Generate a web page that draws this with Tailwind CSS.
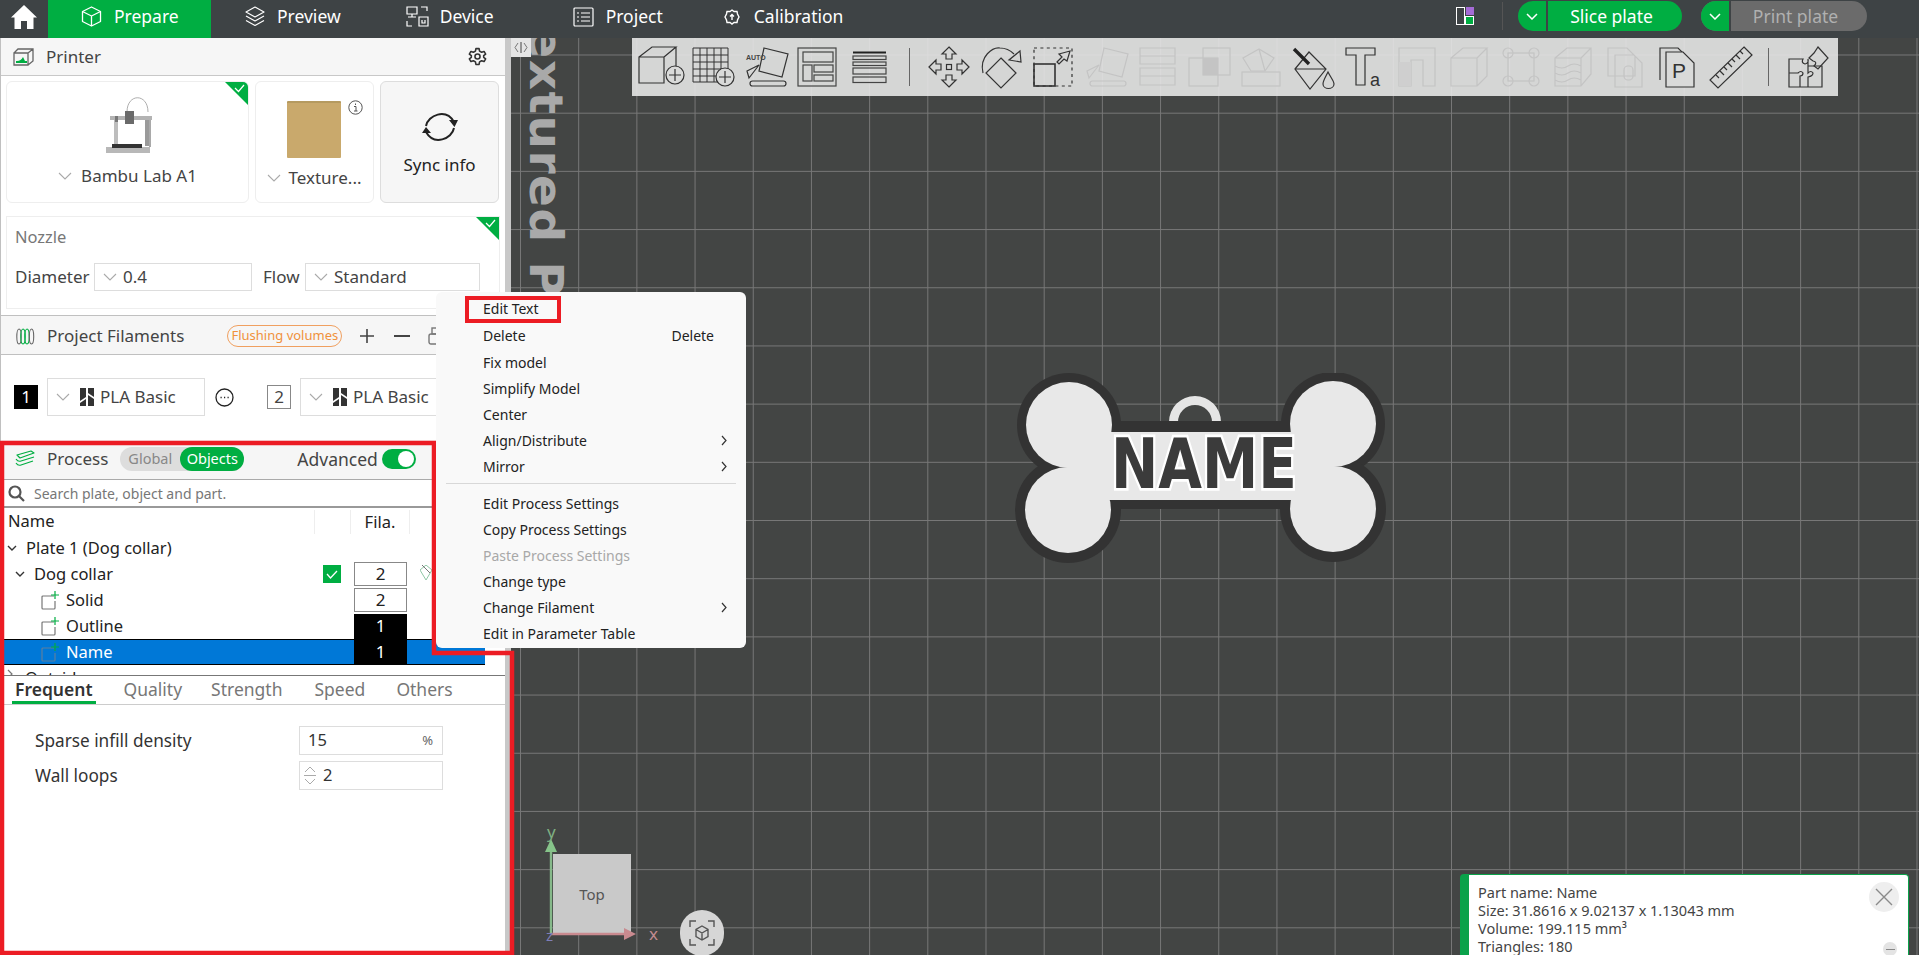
<!DOCTYPE html>
<html lang="en">
<head>
    <meta charset="UTF-8">
    <meta name="viewport" content="width=device-width, initial-scale=1.0">
    <title>Bambu Studio</title>
    <script src="https://cdn.jsdelivr.net/npm/@tailwindcss/browser@4"></script>
</head>
<body class="relative w-[1919px] h-[955px] overflow-hidden bg-[#434544] font-['Noto_Sans',sans-serif] text-[#333]">

    <!-- Top bar -->
    <header class="h-[38px] bg-[#3e4345] flex items-start text-white text-[17.5px]">
        <div class="w-[48px] h-[33px] flex items-center justify-center">
            <svg class="w-[26px] h-[26px]" viewBox="0 0 26 26" fill="#fff"><path d="M13 1 L26 13.5 L22.5 13.5 L22.5 25 L16 25 L16 17 L10 17 L10 25 L3.5 25 L3.5 13.5 L0 13.5 Z"/></svg>
        </div>
        <div class="w-[163px] h-[38px] pb-[5px] bg-[#00ae42] flex items-center pl-[33px] gap-[12px]">
            <svg class="w-[21px] h-[21px]" viewBox="0 0 21 21" fill="none" stroke="#fff" stroke-width="1.3"><path d="M10.5 1 L19.5 5.5 V15.5 L10.5 20 L1.5 15.5 V5.5 Z M1.5 5.5 L10.5 10 L19.5 5.5 M10.5 10 V20" stroke-linejoin="round"/></svg>
            <span>Prepare</span>
        </div>
        <div class="ml-[34px] h-[33px] flex items-center gap-[12px]">
            <svg class="w-[20px] h-[21px]" viewBox="0 0 20 21" fill="none" stroke="#fff" stroke-width="1.2"><path d="M10 1 L19 6 L10 11 L1 6 Z M1 10 L10 15 L19 10 M1 14.5 L10 19.5 L19 14.5" stroke-linejoin="round"/></svg>
            <span>Preview</span>
        </div>
        <div class="ml-[65px] h-[33px] flex items-center gap-[11px]">
            <svg class="w-[23px] h-[21px]" viewBox="0 0 23 21" fill="none" stroke="#fff" stroke-width="1.2"><path d="M1 1 H11 V8 H1 Z M6 8 V11 M2 11 H10 M15 1 H21 V5 M1 15 V20 H6 M13 11 H22 V20 H13 Z M16 14 V17 H19 V14"/></svg>
            <span>Device</span>
        </div>
        <div class="ml-[79px] h-[33px] flex items-center gap-[12px]">
            <svg class="w-[21px] h-[20px]" viewBox="0 0 21 20" fill="none" stroke="#fff" stroke-width="1.2"><rect x="1" y="1" width="19" height="18" rx="1"/><path d="M4 6 H6 M8 6 H17 M4 10 H6 M8 10 H17 M4 14 H6 M8 14 H17"/></svg>
            <span>Project</span>
        </div>
        <div class="ml-[61px] h-[33px] flex items-center gap-[14px]">
            <svg class="w-[16px] h-[16px]" viewBox="0 0 16 16" fill="none" stroke="#fff" stroke-width="1.4"><path d="M8 1 L10 2.5 L13 2.5 L13.5 5 L15 8 L13.5 11 L13 13.5 L10 13.5 L8 15 L6 13.5 L3 13.5 L2.5 11 L1 8 L2.5 5 L3 2.5 L6 2.5 Z"/><path d="M8 11 V6 M6 7.5 L8 5.5 L10 7.5"/></svg>
            <span>Calibration</span>
        </div>
        <div class="ml-auto h-[32px] flex items-center">
            <svg class="w-[18px] h-[18px]" viewBox="0 0 18 18"><rect x="0.5" y="0.5" width="8" height="17" fill="#3e4345" stroke="#fff"/><rect x="10" y="0" width="8" height="8" fill="#a56bd6"/><rect x="9.5" y="9.5" width="8" height="8" fill="#00ae42" stroke="#fff"/></svg>
            <div class="ml-[28px] mr-[15px] w-px h-[28px] bg-[#555]"></div>
            <div class="w-[164px] h-[30px] rounded-full overflow-hidden bg-[#00ae42] flex items-center">
                <div class="w-[30px] h-full flex items-center justify-center border-r-2 border-[#3e4345]">
                    <svg class="w-[12px] h-[7px]" viewBox="0 0 12 7" fill="none" stroke="#fff" stroke-width="1.5"><path d="M1 1 L6 6 L11 1"/></svg>
                </div>
                <span class="flex-1 text-center pr-[7px]">Slice plate</span>
            </div>
            <div class="ml-[19px] mr-[52px] w-[166px] h-[30px] rounded-full overflow-hidden bg-[#6b6b6b] flex items-center">
                <div class="w-[30px] h-full bg-[#00ae42] flex items-center justify-center border-r-2 border-[#3e4345]">
                    <svg class="w-[12px] h-[7px]" viewBox="0 0 12 7" fill="none" stroke="#fff" stroke-width="1.5"><path d="M1 1 L6 6 L11 1"/></svg>
                </div>
                <span class="flex-1 text-center pr-[7px] text-[#b0b0b0]">Print plate</span>
            </div>
        </div>
    </header>

    <main class="flex h-[917px]">
        <!-- Left sidebar -->
        <aside class="w-[505px] shrink-0 bg-white border-l border-[#c0c0c0] flex flex-col overflow-hidden">
            <!-- Printer -->
            <div class="h-[38px] shrink-0 bg-[#f6f6f6] border-b border-[#c8c8c8] flex items-center pl-[12px] pr-[18px] text-[17px] text-[#444]">
                <svg class="w-[21px] h-[18px]" viewBox="0 0 21 18" fill="none" stroke="#666" stroke-width="1.3"><path d="M1 5 H15 V17 H1 Z M1 5 L5 1 H20 V13 L15 17 M15 5 L20 1"/><path d="M4 13 Q8 13 10 9 L12 13 H14 V15 H3 V13 Z" fill="#00ae42" stroke="none"/></svg>
                <span class="ml-[12px]">Printer</span>
                <svg class="w-[19px] h-[19px] ml-auto" viewBox="0 0 24 24" fill="none" stroke="#333" stroke-width="2"><circle cx="12" cy="12" r="3.2"/><path d="M10 2 H14 L14.6 5.2 L17.2 6.7 L20.3 5.6 L22.3 9 L19.8 11 V13 L22.3 15 L20.3 18.4 L17.2 17.3 L14.6 18.8 L14 22 H10 L9.4 18.8 L6.8 17.3 L3.7 18.4 L1.7 15 L4.2 13 V11 L1.7 9 L3.7 5.6 L6.8 6.7 L9.4 5.2 Z" stroke-linejoin="round"/></svg>
            </div>
            <div class="mt-[5px] ml-[5px] flex gap-[6px] h-[122px] shrink-0">
                <div class="relative w-[243px] border border-[#eee] rounded-[6px] flex flex-col items-center pt-[15px] overflow-hidden">
                    <svg class="absolute right-0 top-0 w-[23px] h-[23px]" viewBox="0 0 23 23"><path d="M0 0 H23 V23 Z" fill="#00ae42"/><path d="M10 6 L13.5 9.5 L19 3" fill="none" stroke="#fff" stroke-width="1.2"/></svg>
                    <svg class="w-[50px] h-[58px] ml-[2px]" viewBox="0 0 50 58" fill="none"><path d="M23 15 C23 -4 44 -4 44 15" stroke="#999" stroke-width="0.8"/><rect x="6" y="19" width="42" height="4" fill="#b3b3b3"/><rect x="10" y="23" width="4" height="26" fill="#bdbdbd"/><rect x="11" y="19" width="3" height="6" fill="#777"/><rect x="41" y="23" width="4" height="26" fill="#9a9a9a"/><rect x="21" y="14" width="9" height="13" fill="#6a6a6a"/><rect x="2" y="50" width="44" height="6" fill="#b8b8b8"/><rect x="8" y="47" width="30" height="4" fill="#333"/><path d="M46 23 V50" stroke="#555" stroke-width="1"/></svg>
                    <div class="flex items-center mt-[8px] text-[17px] text-[#444]">
                        <svg class="w-[14px] h-[8px] mr-[9px]" viewBox="0 0 14 8" fill="none" stroke="#aaa" stroke-width="1.1"><path d="M1 1 L7 7 L13 1"/></svg>
                        <span>Bambu Lab A1</span>
                    </div>
                </div>
                <div class="relative w-[119px] border border-[#eee] rounded-[6px] flex flex-col items-center pt-[19px]">
                    <svg class="absolute left-[92px] top-[18px] w-[15px] h-[15px]" viewBox="0 0 15 15" fill="none" stroke="#555"><circle cx="7.5" cy="7.5" r="6.7"/><path d="M6 6.5 H8 V11 M6 11 H9.5 M7.5 3.5 V5"/></svg>
                    <div class="w-[54px] h-[57px] rounded-[1px] bg-[#c9a96c] border-t-2 border-[#b59a60] -ml-[2px]"></div>
                    <div class="flex items-center mt-[7px] text-[17px] text-[#444]">
                        <svg class="w-[14px] h-[8px] mr-[7px]" viewBox="0 0 14 8" fill="none" stroke="#aaa" stroke-width="1.1"><path d="M1 1 L7 7 L13 1"/></svg>
                        <span>Texture...</span>
                    </div>
                </div>
                <div class="w-[119px] bg-[#f6f6f6] border border-[#ddd] rounded-[6px] flex flex-col items-center pt-[29px] text-[17px] text-[#222]">
                    <svg class="w-[38px] h-[32px]" viewBox="0 0 38 32" fill="none" stroke="#222" stroke-width="2"><path d="M5 15 C7 4 25 -3 33 11 M33 17 C31 28 13 35 5 21"/><path d="M28 9 H37 L33.5 16 Z M1 22 H10 L5 16 Z" fill="#222" stroke="none"/></svg>
                    <span class="mt-[9px]">Sync info</span>
                </div>
            </div>
            <!-- Nozzle -->
            <div class="relative mt-[13px] ml-[5px] w-[494px] h-[93px] shrink-0 border border-[#eee] text-[17px] text-[#444]">
                <svg class="absolute right-0 top-0 w-[23px] h-[23px]" viewBox="0 0 23 23"><path d="M0 0 H23 V23 Z" fill="#00ae42"/><path d="M10 6 L13.5 9.5 L19 3" fill="none" stroke="#fff" stroke-width="1.2"/></svg>
                <div class="pl-[8px] pt-[8px] text-[#777] text-[16.5px]">Nozzle</div>
                <div class="flex items-center mt-[13px] pl-[8px]">
                    <span class="w-[79px]">Diameter</span>
                    <div class="w-[158px] h-[28px] border border-[#ddd] flex items-center pl-[8px]">
                        <svg class="w-[14px] h-[8px] mr-[6px]" viewBox="0 0 14 8" fill="none" stroke="#aaa" stroke-width="1.1"><path d="M1 1 L7 7 L13 1"/></svg>
                        <span>0.4</span>
                    </div>
                    <span class="ml-[11px] w-[42px]">Flow</span>
                    <div class="w-[175px] h-[28px] border border-[#ddd] flex items-center pl-[8px]">
                        <svg class="w-[14px] h-[8px] mr-[6px]" viewBox="0 0 14 8" fill="none" stroke="#aaa" stroke-width="1.1"><path d="M1 1 L7 7 L13 1"/></svg>
                        <span>Standard</span>
                    </div>
                </div>
            </div>
            <!-- Project filaments -->
            <div class="mt-[6px] h-[40px] shrink-0 bg-[#f6f6f6] border-y border-[#c0c0c0] flex items-center pt-[2px] pl-[15px] text-[17px] text-[#444]">
                <svg class="w-[19px] h-[17px]" viewBox="0 0 19 17" fill="none" stroke="#666" stroke-width="1.1"><ellipse cx="3" cy="8.5" rx="2.2" ry="7.5"/><ellipse cx="7" cy="8.5" rx="2.2" ry="7.5" stroke="#00ae42"/><ellipse cx="11" cy="8.5" rx="2.2" ry="7.5" stroke="#00ae42"/><ellipse cx="15.5" cy="8.5" rx="2.2" ry="7.5"/></svg>
                <span class="ml-[12px]">Project Filaments</span>
                <span class="ml-[43px] w-[115px] h-[22px] rounded-full border border-[#f0a060] flex items-center justify-center text-[13px] text-[#f0913c] whitespace-nowrap">Flushing volumes</span>
                <svg class="ml-[18px] w-[14px] h-[14px]" viewBox="0 0 14 14" stroke="#444" stroke-width="1.6"><path d="M7 0 V14 M0 7 H14"/></svg>
                <svg class="ml-[20px] w-[16px] h-[2px]" viewBox="0 0 16 2" stroke="#444" stroke-width="2"><path d="M0 1 H16"/></svg>
                <svg class="ml-[18px] w-[10px] h-[18px]" viewBox="0 0 10 18" fill="none" stroke="#777" stroke-width="1.4"><rect x="1" y="7" width="12" height="10" rx="2"/><rect x="4" y="1" width="8" height="6"/></svg>
            </div>
            <div class="h-[85px] shrink-0 flex items-center pb-[1px] pl-[13px] text-[17px] text-[#444]">
                <span class="w-[24px] h-[24px] bg-black text-white flex items-center justify-center">1</span>
                <div class="ml-[9px] w-[158px] h-[38px] border border-[#ddd] flex items-center pl-[8px]">
                    <svg class="w-[14px] h-[8px] mr-[10px]" viewBox="0 0 14 8" fill="none" stroke="#aaa" stroke-width="1.1"><path d="M1 1 L7 7 L13 1"/></svg>
                    <svg class="w-[14px] h-[18px] mr-[6px]" viewBox="0 0 14 18" fill="#333"><path d="M0 0 H6 V9 L0 13 Z M8 0 H14 V9 L8 5 Z M0 15 L6 11 V18 H0 Z M8 7 L14 11 V18 H8 Z"/></svg>
                    <span>PLA Basic</span>
                </div>
                <svg class="ml-[10px] w-[19px] h-[19px]" viewBox="0 0 19 19" fill="none" stroke="#222" stroke-width="1.3"><circle cx="9.5" cy="9.5" r="8.5"/><path d="M5.5 9.5 H6.7 M9 9.5 H10.2 M12.5 9.5 H13.7" stroke-width="1.6"/></svg>
                <span class="ml-[33px] w-[24px] h-[24px] border border-[#888] flex items-center justify-center">2</span>
                <div class="ml-[9px] w-[158px] h-[38px] border border-[#ddd] flex items-center pl-[8px]">
                    <svg class="w-[14px] h-[8px] mr-[10px]" viewBox="0 0 14 8" fill="none" stroke="#aaa" stroke-width="1.1"><path d="M1 1 L7 7 L13 1"/></svg>
                    <svg class="w-[14px] h-[18px] mr-[6px]" viewBox="0 0 14 18" fill="#333"><path d="M0 0 H6 V9 L0 13 Z M8 0 H14 V9 L8 5 Z M0 15 L6 11 V18 H0 Z M8 7 L14 11 V18 H8 Z"/></svg>
                    <span>PLA Basic</span>
                </div>
            </div>
            <!-- Process -->
            <div class="h-[40px] shrink-0 bg-[#f6f6f6] border-b border-[#aaa] flex items-center pb-[1px] pl-[14px] text-[17px] text-[#444]">
                <svg class="w-[20px] h-[18px]" viewBox="0 0 20 18" fill="none" stroke="#00ae42" stroke-width="1.2"><path d="M2 5 L16 1 L19 3 L5 8 Z M1 9 Q3 12 6 11 L19 7 M1 13 Q3 16 6 15 L18 11" stroke-linejoin="round"/></svg>
                <span class="ml-[12px]">Process</span>
                <div class="ml-[12px] w-[124px] h-[24px] rounded-full bg-[#ddd] flex items-center text-[14.5px]">
                    <span class="w-[60px] text-center text-[#888]">Global</span>
                    <span class="w-[64px] h-full rounded-full bg-[#00ae42] text-white flex items-center justify-center">Objects</span>
                </div>
                <span class="ml-[53px] text-[17.5px]">Advanced</span>
                <div class="ml-[4px] w-[34px] h-[20px] rounded-full bg-[#00ae42] flex items-center justify-end pr-[2px]">
                    <span class="w-[16px] h-[16px] rounded-full bg-white"></span>
                </div>
            </div>
            <div class="h-[28px] shrink-0 border-b-2 border-[#999] flex items-center pl-[7px] text-[14px] text-[#777]">
                <svg class="w-[17px] h-[17px]" viewBox="0 0 17 17" fill="none" stroke="#555" stroke-width="2.2"><circle cx="7" cy="7" r="5.5"/><path d="M11 11 L16 16"/></svg>
                <span class="ml-[9px]">Search plate, object and part.</span>
            </div>
            <!-- Object tree -->
            <div class="h-[168px] shrink-0 overflow-hidden border-b border-[#777] text-[16.5px] text-[#222]">
                <div class="h-[27px] w-[410px] flex items-center pl-[7px]">
                    <span class="w-[306px]">Name</span>
                    <span class="w-[36px] h-[24px] border-l border-[#eee]"></span>
                    <span class="w-[60px] h-[24px] border-x border-[#eee] text-center">Fila.</span>
                </div>
                <div class="h-[26px] flex items-center pl-[6px]">
                    <svg class="w-[10px] h-[6px] mr-[9px]" viewBox="0 0 10 6" fill="none" stroke="#333" stroke-width="1.4"><path d="M1 1 L5 5 L9 1"/></svg>
                    <span>Plate 1 (Dog collar)</span>
                </div>
                <div class="h-[26px] flex items-center pl-[14px]">
                    <svg class="w-[10px] h-[6px] mr-[9px]" viewBox="0 0 10 6" fill="none" stroke="#333" stroke-width="1.4"><path d="M1 1 L5 5 L9 1"/></svg>
                    <span class="w-[289px]">Dog collar</span>
                    <span class="w-[18px] h-[18px] bg-[#00ae42] flex items-center justify-center">
                        <svg class="w-[12px] h-[9px]" viewBox="0 0 12 9" fill="none" stroke="#fff" stroke-width="1.3"><path d="M1 4 L4.5 8 L11 1"/></svg>
                    </span>
                    <span class="ml-[13px] w-[53px] h-[24px] border border-[#888] flex items-center justify-center text-[17px]">2</span>
                    <svg class="ml-[13px] w-[12px] h-[18px]" viewBox="0 0 12 18" fill="none" stroke="#8fc7a5"><path d="M0 5 L6 0 L12 5 L6 15 Z"/><path d="M2 0 L10 8" stroke="#777"/></svg>
                </div>
                <div class="h-[26px] flex items-center pl-[40px]">
                    <svg class="w-[21px] h-[19px]" viewBox="0 0 21 19" fill="none" stroke="#777" stroke-width="1.2"><path d="M13 5 H2 Q1 5 1 6 V17 Q1 18 2 18 H13 Q14 18 14 17 V10"/><path d="M14 0 V8 M10 4 H18" stroke="#00ae42"/></svg>
                    <span class="ml-[4px] w-[288px]">Solid</span>
                    <span class="w-[53px] h-[24px] border border-[#888] flex items-center justify-center text-[17px]">2</span>
                </div>
                <div class="h-[26px] flex items-center pl-[40px]">
                    <svg class="w-[21px] h-[19px]" viewBox="0 0 21 19" fill="none" stroke="#777" stroke-width="1.2"><path d="M13 5 H2 Q1 5 1 6 V17 Q1 18 2 18 H13 Q14 18 14 17 V10"/><path d="M14 0 V8 M10 4 H18" stroke="#00ae42"/></svg>
                    <span class="ml-[4px] w-[288px]">Outline</span>
                    <span class="w-[53px] h-[25px] bg-black text-white flex items-center justify-center text-[17px]">1</span>
                </div>
                <div class="h-[26px] w-[482px] ml-[2px] bg-[#0078d7] border-y border-black flex items-center pl-[38px] text-white">
                    <svg class="w-[21px] h-[19px]" viewBox="0 0 21 19" fill="none" stroke="#5b7f9f" stroke-width="1.2"><path d="M13 5 H2 Q1 5 1 6 V17 Q1 18 2 18 H13 Q14 18 14 17 V10"/><path d="M14 0 V8 M10 4 H18" stroke="#00ae42"/></svg>
                    <span class="ml-[4px] w-[288px]">Name</span>
                    <span class="w-[53px] h-[24px] bg-black text-white flex items-center justify-center text-[17px]">1</span>
                </div>
                <div class="h-[11px] overflow-hidden flex items-start pl-[6px]">
                    <svg class="w-[6px] h-[10px] mr-[12px] mt-[4px]" viewBox="0 0 6 10" fill="none" stroke="#777" stroke-width="1.2"><path d="M1 1 L5 5 L1 9"/></svg>
                    <span class="leading-[26px]">Outside</span>
                </div>
            </div>
            <!-- Settings tabs -->
            <div class="h-[29px] shrink-0 border-b border-[#ccc] flex pl-[11px] text-[17.5px] leading-[27px] text-[#777]">
                <span class="h-[28px] px-[3px] border-b-[3px] border-[#00ae42] font-semibold text-[#333]">Frequent</span>
                <span class="ml-[28px]">Quality</span>
                <span class="ml-[29px]">Strength</span>
                <span class="ml-[32px]">Speed</span>
                <span class="ml-[31px]">Others</span>
            </div>
            <div class="pt-[21px] pl-[34px] text-[17.2px] text-[#333]">
                <div class="h-[29px] flex items-center">
                    <span class="w-[264px]">Sparse infill density</span>
                    <div class="w-[144px] h-[29px] border border-[#ddd] flex items-center justify-between pl-[8px] pr-[9px] text-[16.5px]">
                        <span>15</span><span class="text-[13px] text-[#666]">%</span>
                    </div>
                </div>
                <div class="h-[29px] mt-[6px] flex items-center">
                    <span class="w-[264px]">Wall loops</span>
                    <div class="w-[144px] h-[29px] border border-[#ddd] flex items-center pl-[3px] text-[16.5px]">
                        <svg class="w-[14px] h-[21px]" viewBox="0 0 14 21" fill="none" stroke="#aaa"><path d="M2 7 L7 2 L12 7 M1 10.5 H13 M2 14 L7 19 L12 14"/></svg>
                        <span class="ml-[6px]">2</span>
                    </div>
                </div>
            </div>
        </aside>

        <!-- 3D canvas -->
        <section class="relative flex-1 overflow-hidden border-l-[6px] border-[#c8c8c8] bg-[#434544] bg-[linear-gradient(#777_1.3px,transparent_1.3px),linear-gradient(90deg,#777_1.3px,transparent_1.3px)] bg-[size:58.2px_58.2px] bg-[position:9px_16.5px]">
            <!-- plate label printed on the bed -->
            <div class="absolute left-[11px] top-0 w-[52px] h-[254px] overflow-hidden">
                <div class="absolute left-0 top-[-39px] [writing-mode:vertical-rl] font-['DejaVu_Sans',sans-serif] text-[47px] tracking-[1.5px] font-bold leading-[48px] whitespace-nowrap text-[#a9a9a9]">Textured PEI</div>
            </div>
            <div class="absolute left-0 top-0 w-[20px] h-[19px] bg-[#e5e5e5] flex items-center justify-center">
                <svg class="w-[14px] h-[11px]" viewBox="0 0 14 11" fill="none" stroke="#777"><path d="M4 1 L1 5.5 L4 10 M10 1 L13 5.5 L10 10"/><path d="M7 0 V11" stroke="#444"/></svg>
            </div>

            <!-- Toolbar -->
            <div class="absolute left-[121px] top-0 w-[1206px] h-[58px] bg-[#e6e6e6]/90 flex items-center pl-[3px]">
                <div class="flex [&>svg]:mx-[2px] [&>svg]:w-[48px] [&>svg]:h-[46px]">
                    <svg viewBox="0 0 48 46" fill="none" stroke="#333" stroke-width="1.2"><path d="M2 13 H27 V39 H2 Z M2 13 L15 3 H39 L27 13 M39 3 V30"/><circle cx="38" cy="31" r="9" fill="#d9dad9"/><path d="M38 25 V37 M32 31 H44"/></svg>
                    <svg viewBox="0 0 48 46" fill="none" stroke="#333" stroke-width="1"><path d="M4 4 H39 V38 H4 Z M11 4 V38 M18 4 V38 M25 4 V38 M32 4 V38 M4 11 H39 M4 18 H39 M4 25 H39 M4 32 H39"/><circle cx="36" cy="33" r="9" fill="#d9dad9" stroke-width="1.2"/><path d="M36 27 V39 M30 33 H42" stroke-width="1.2"/></svg>
                    <svg viewBox="0 0 48 46" fill="none" stroke="#333" stroke-width="1.2"><path d="M23 4 L47 10 L41 33 L18 27 Z M6 27 L18 21 L8 34 Z"/><rect x="9" y="37" width="36" height="5" rx="2.5"/><text x="5" y="16" font-size="7" font-weight="700" fill="#444" stroke="none" font-family="Liberation Sans">AUTO</text></svg>
                    <svg viewBox="0 0 48 46" fill="none" stroke="#444" stroke-width="1.2"><rect x="5" y="4" width="38" height="38"/><rect x="10" y="8" width="30" height="10"/><rect x="10" y="21" width="9" height="16"/><rect x="21" y="21" width="19" height="7"/><rect x="21" y="31" width="19" height="6"/></svg>
                    <svg viewBox="0 0 48 46" fill="none" stroke="#444" stroke-width="1.2"><path d="M8 8.5 H41" stroke-width="2" stroke="#222"/><rect x="8" y="12" width="33" height="3.5"/><rect x="8" y="18" width="33" height="3.5"/><rect x="8" y="24" width="33" height="6"/><rect x="8" y="33" width="33" height="5.5"/></svg>
                </div>
                <div class="w-[28px] flex justify-center"><span class="block w-px h-[38px] bg-[#666]"></span></div>
                <div class="flex [&>svg]:mx-[2px] [&>svg]:w-[48px] [&>svg]:h-[46px]">
                    <svg viewBox="0 0 48 46" fill="none" stroke="#333" stroke-width="1.2"><path d="M24 3 L31 10 H27 V15 H21 V10 H17 Z M24 43 L31 36 H27 V31 H21 V36 H17 Z M4 23 L11 16 V20 H16 V26 H11 V30 Z M44 23 L37 16 V20 H32 V26 H37 V30 Z"/><rect x="21.5" y="20.5" width="5" height="5"/></svg>
                    <svg viewBox="0 0 48 46" fill="none" stroke="#333" stroke-width="1.2"><path d="M24 14 L39 29 L24 44 L9 29 Z"/><path d="M6 29 C2 12 16 3 23 4 C29 4 34 7 37 10"/><path d="M43 7 L44 18 L32 16 Z"/></svg>
                    <svg viewBox="0 0 48 46" fill="none" stroke="#333" stroke-width="1.2"><rect x="5" y="4" width="38" height="38" stroke-dasharray="3 3.4"/><rect x="5" y="20" width="21" height="22" stroke-width="1.6"/><path d="M28 18 L33 13 L30 10 L41 7 L38 17 L35 15 L30 20 Z"/></svg>
                    <svg viewBox="0 0 48 46" fill="none" stroke="#c4c4c4" stroke-width="1.2"><path d="M23 4 L47 10 L41 33 L18 27 Z M6 27 L18 21 L8 34 Z"/><rect x="9" y="37" width="36" height="5" rx="2.5"/></svg>
                    <svg viewBox="0 0 48 46" fill="none" stroke="#c4c4c4" stroke-width="1.2"><path d="M7 4 H42 V20 H7 Z M7 12 H42 M7 24 H42 V41 H7 Z M7 32 H42"/></svg>
                    <svg viewBox="0 0 48 46" fill="none" stroke="#c4c4c4" stroke-width="1.2"><rect x="4" y="14" width="29" height="28"/><rect x="18" y="4" width="27" height="27"/><rect x="18" y="14" width="15" height="17" fill="#c4c4c4" stroke="none"/></svg>
                    <svg viewBox="0 0 48 46" fill="none" stroke="#c4c4c4" stroke-width="1.2"><rect x="5" y="28" width="38" height="14"/><path d="M6 14 L22 5 L37 14 L28 27 H14 Z M6 14 L14 27 M22 5 L28 27"/></svg>
                    <svg viewBox="0 0 48 46" fill="none" stroke="#333" stroke-width="1.2"><path d="M6 25 L20 8 L37 25 L21 45 Z M6 25 H37"/><path d="M5 5 L20 20" stroke-width="3.4" stroke="#222"/><path d="M39 28 C36 34 34 37 34 40 C34 43 37 44.5 39.5 44.5 C42 44.5 45 43 45 40 C45 37 42 34 39 28 Z"/></svg>
                    <svg viewBox="0 0 48 46" fill="none" stroke="#333" stroke-width="1.2"><path d="M5 4 H34 V11 H24 V41 H15 V11 H5 Z"/><text x="29" y="42" font-size="18" fill="#333" stroke="none" font-family="Liberation Sans">a</text></svg>
                    <svg viewBox="0 0 48 46" fill="none" stroke="#c4c4c4" stroke-width="1.2"><path d="M6 4 H42 V42 H30 V16 H18 V42 H6 Z"/><rect x="6" y="18" width="12" height="24" fill="#cfcfcf" stroke="none"/></svg>
                    <svg viewBox="0 0 48 46" fill="none" stroke="#c4c4c4" stroke-width="1.2"><path d="M6 14 H32 V42 H6 Z M6 14 L18 4 H42 L32 14 M42 4 V32 L32 42"/></svg>
                    <svg viewBox="0 0 48 46" fill="none" stroke="#c4c4c4" stroke-width="1.2"><rect x="11" y="9" width="26" height="28"/><ellipse cx="11" cy="9" rx="5" ry="5"/><ellipse cx="37" cy="9" rx="5" ry="5"/><ellipse cx="11" cy="37" rx="5" ry="5"/><ellipse cx="37" cy="37" rx="5" ry="5"/></svg>
                    <svg viewBox="0 0 48 46" fill="none" stroke="#c4c4c4" stroke-width="1.2"><path d="M6 14 L18 4 H42 V30 L32 42 H6 Z M6 14 H32 V42 M32 14 L42 4 M6 22 Q13 26 19 22 T32 22 M6 29 Q13 33 19 29 T32 29 M6 36 Q13 40 19 36 T32 36"/></svg>
                    <svg viewBox="0 0 48 46" fill="none" stroke="#c4c4c4" stroke-width="1.2"><path d="M7 4 H26 L34 12 V32 H7 Z M14 11 H33 L41 19 V43 H14 Z"/><rect x="23" y="22" width="9" height="14" rx="4"/></svg>
                    <svg viewBox="0 0 48 46" fill="none" stroke="#333" stroke-width="1.2"><path d="M7 36 V4 H25 L34 13"/><path d="M13 40 V8 H30 L41 19 V43 H13 Z" fill="#d9dad9"/><text x="19" y="34" font-size="21" fill="#333" stroke="none" font-family="Liberation Sans">P</text></svg>
                    <svg viewBox="0 0 48 46" fill="none" stroke="#333" stroke-width="1.2"><path d="M39 3 L47 11 L13 44 L5 36 Z"/><path d="M35 7 L38 10 M31 11 L35 15 M27 15 L30 18 M23 19 L27 23 M19 23 L22 26 M15 27 L19 31 M11 31 L14 34"/></svg>
                </div>
                <div class="w-[27px] flex justify-center"><span class="block w-px h-[38px] bg-[#666]"></span></div>
                <svg class="w-[48px] h-[46px] mx-[2px]" viewBox="0 0 48 46" fill="none" stroke="#333" stroke-width="1.2"><path d="M5 15 H19 Q17 19 21 20 Q25 19 24 15 V22 H38 V43 H5 Z M5 29 H14 Q17 26 19 29 Q19 32 16 32 V43 M24 22 V29 Q27 26 29 29 Q29 32 24 33 V43"/><path d="M34 3 L44 14 L34 25 L30 22 Q34 18 29 17 L25 14 Q28 11 30 9 Z"/></svg>
            </div>

            <!-- Bone shaped model -->
            <svg class="absolute left-[504px] top-[335px] w-[372px] h-[190px]" viewBox="0 0 372 190">
                <g fill="#333">
                    <circle cx="54" cy="52" r="52"/><circle cx="53" cy="137" r="53"/>
                    <circle cx="318" cy="51" r="52"/><circle cx="318" cy="136" r="53"/>
                </g>
                <path d="M154 49 A26 26 0 0 1 206 49 H197 A17 17 0 0 0 163 49 Z" fill="#e5e5e5"/>
                <rect x="54" y="48" width="264" height="88" fill="#333"/>
                <g fill="#e8e8e8">
                    <circle cx="54" cy="52" r="43"/><circle cx="53" cy="137" r="43"/>
                    <circle cx="318" cy="51" r="43"/><circle cx="318" cy="136" r="43"/>
                    <rect x="54" y="59" width="264" height="68"/>
                </g>
                <text x="96" y="115" textLength="186" lengthAdjust="spacingAndGlyphs" font-family="DejaVu Sans" font-weight="700" font-size="70" fill="#3b3b3b" stroke="#fff" stroke-width="5.5" paint-order="stroke" stroke-linejoin="miter">NAME</text>
            </svg>

            <!-- Orientation gizmo -->
            <div class="absolute left-[42px] top-[816px] w-[78px] h-[80px] bg-[#c9c9c9] flex items-center justify-center text-[15px] text-[#555]">Top</div>
            <svg class="absolute left-[20px] top-[780px] w-[140px] h-[130px]" viewBox="0 0 140 130" fill="none">
                <path d="M20 32 V116" stroke="#86b98a" stroke-width="2.4"/><path d="M20 21 L26 34 H14 Z" fill="#86c48a"/>
                <path d="M20 116 H96" stroke="#c98a8f" stroke-width="2.4"/><path d="M105 116 L93 110 V122 Z" fill="#c98a8f"/>
                <text x="16" y="20" font-size="17" fill="#7fb083" font-family="Noto Sans">y</text>
                <text x="118" y="122" font-size="17" fill="#c28b90" font-family="Noto Sans">x</text>
                <text x="15" y="123" font-size="15" fill="#7f7fb8" font-family="Noto Sans">z</text>
            </svg>
            <div class="absolute left-[169px] top-[872px] w-[44px] h-[46px] rounded-full bg-[#d6d6d6] flex items-center justify-center">
                <svg class="w-[26px] h-[28px]" viewBox="0 0 26 28" fill="none" stroke="#555" stroke-width="1.4"><path d="M1 8 V2 H7 M19 2 H25 V8 M25 20 V26 H19 M7 26 H1 V20"/><path d="M13 7 L19 10.5 V17.5 L13 21 L7 17.5 V10.5 Z M7 10.5 L13 14 L19 10.5 M13 14 V21"/></svg>
            </div>

            <!-- Notification -->
            <div class="absolute left-[949px] top-[836px] w-[449px] h-[90px] bg-white border border-[#0aa24a] border-l-[9px] rounded-[4px] pl-[9px] pt-[8px] text-[14.5px] leading-[18px] text-[#444]">
                <p>Part name: Name</p>
                <p>Size: 31.8616 x 9.02137 x 1.13043 mm</p>
                <p>Volume: 199.115 mm³</p>
                <p>Triangles: 180</p>
                <div class="absolute right-[9px] top-[7px] w-[30px] h-[30px] rounded-full bg-[#eee] flex items-center justify-center">
                    <svg class="w-[18px] h-[18px]" viewBox="0 0 18 18" stroke="#8a8a8a" stroke-width="1.4"><path d="M1 1 L17 17 M17 1 L1 17"/></svg>
                </div>
                <div class="absolute right-[11px] top-[67px] w-[14px] h-[14px] rounded-full bg-[#e4e4e4] flex items-center justify-center">
                    <span class="block w-[9px] h-px bg-[#888]"></span>
                </div>
            </div>
        </section>
    </main>

    <!-- Red annotation around the process panel -->
    <svg class="absolute left-0 top-0 w-[1919px] h-[955px] pointer-events-none" viewBox="0 0 1919 955" fill="none" stroke="#ec1c24" stroke-width="4.5"><path d="M2 443 H434 V653 H512 V953 H2 Z"/></svg>

    <!-- Context menu -->
    <div class="absolute left-[436px] top-[292px] w-[310px] h-[356px] bg-[#f9f9f9] rounded-[6px] pt-[3px] text-[14px] text-[#222]">
        <div class="h-[27px] flex items-center pl-[47px]">Edit Text</div>
        <div class="h-[27px] flex items-center justify-between pl-[47px] pr-[32px]"><span>Delete</span><span>Delete</span></div>
        <div class="h-[26px] flex items-center pl-[47px]">Fix model</div>
        <div class="h-[26px] flex items-center pl-[47px]">Simplify Model</div>
        <div class="h-[26px] flex items-center pl-[47px]">Center</div>
        <div class="h-[26px] flex items-center justify-between pl-[47px] pr-[19px]"><span>Align/Distribute</span><svg class="w-[6px] h-[11px]" viewBox="0 0 6 11" fill="none" stroke="#333" stroke-width="1.2"><path d="M1 1 L5 5.5 L1 10"/></svg></div>
        <div class="h-[26px] flex items-center justify-between pl-[47px] pr-[19px]"><span>Mirror</span><svg class="w-[6px] h-[11px]" viewBox="0 0 6 11" fill="none" stroke="#333" stroke-width="1.2"><path d="M1 1 L5 5.5 L1 10"/></svg></div>
        <div class="h-[11px] pt-[4px] px-[10px]"><div class="h-px bg-[#d8d8d8]"></div></div>
        <div class="h-[26px] flex items-center pl-[47px]">Edit Process Settings</div>
        <div class="h-[26px] flex items-center pl-[47px]">Copy Process Settings</div>
        <div class="h-[26px] flex items-center pl-[47px] text-[#a8a8a8]">Paste Process Settings</div>
        <div class="h-[26px] flex items-center pl-[47px]">Change type</div>
        <div class="h-[26px] flex items-center justify-between pl-[47px] pr-[19px]"><span>Change Filament</span><svg class="w-[6px] h-[11px]" viewBox="0 0 6 11" fill="none" stroke="#333" stroke-width="1.2"><path d="M1 1 L5 5.5 L1 10"/></svg></div>
        <div class="h-[26px] flex items-center pl-[47px]">Edit in Parameter Table</div>
    </div>
    <div class="absolute left-[465px] top-[296px] w-[96px] h-[27px] border-4 border-[#ec1c24]"></div>
</body>
</html>
